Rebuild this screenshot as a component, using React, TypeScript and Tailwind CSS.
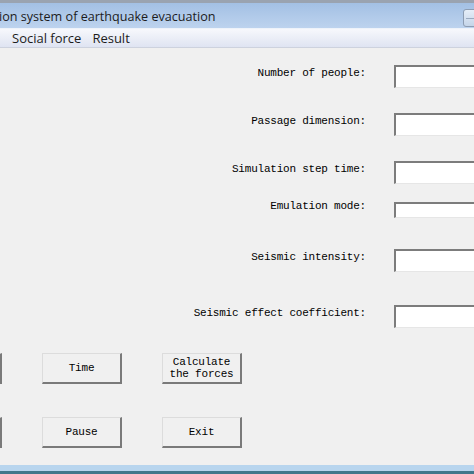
import React from "react";

const mono = { fontFamily: '"Liberation Mono", "DejaVu Sans Mono", monospace' };

function Field({ label, h = 23, mt }: { label: string; h?: number; mt: string }) {
  return (
    <div className={`flex items-center ${mt}`}>
      <div
        className="w-[366px] shrink-0 text-right text-[11px] tracking-[-0.22px] leading-[14px] text-black -translate-y-[4px]"
        style={mono}
      >
        {label}
      </div>
      <div
        className="ml-[28px] w-[90px] shrink-0 bg-white border-t-2 border-l-2 border-t-[#7c7c7c] border-l-[#7c7c7c] border-b border-b-[#e6e6e6]"
        style={{ height: h }}
      />
    </div>
  );
}

function Btn({ children, extra = "" }: { children?: React.ReactNode; extra?: string }) {
  return (
    <div
      className={`w-[80px] h-[31px] shrink-0 flex items-center justify-center text-center leading-[12px] text-[11px] tracking-[-0.22px] text-black bg-[#f0f0f0] border-t border-l border-t-[#dcdcdc] border-l-[#dcdcdc] border-r-2 border-b-2 border-r-[#7a7a7a] border-b-[#7a7a7a] ${extra}`}
      style={mono}
    >
      {children}
    </div>
  );
}

export default function App() {
  return (
    <div
      className="w-[474px] h-[474px] overflow-hidden flex flex-col bg-[#f0f0f0]"
      style={{ fontFamily: '"Open Sans", "Noto Sans", sans-serif' }}
    >
      <div className="h-[3px] bg-[#9aa3b0] shrink-0" />
      <div className="h-[25px] shrink-0 flex items-center justify-between bg-gradient-to-b from-[#a3c0e4] to-[#bdd3ee]">
        <span className="text-[12.6px] text-[#1c1c1c] -ml-[1px] mt-[4px] whitespace-nowrap">
          ion system of earthquake evacuation
        </span>
        <div className="w-[14px] h-[18px] mt-[5px] -mr-[3px] rounded-[3px] border border-[#8d9db3] bg-gradient-to-b from-[#e6eef8] to-[#c5d5e9] flex flex-col justify-center">
          <div className="h-px bg-[#9aaac0] mx-[2px]" />
        </div>
      </div>
      <div className="h-px bg-[#eef3fa] shrink-0" />
      <div className="h-[19px] shrink-0 flex items-center pt-[2px] bg-gradient-to-b from-[#f7f8fc] to-[#dfe4f2] border-b border-b-[#cdd2de] text-[13px] text-[#1c1c1c]">
        <span className="ml-[12px]">Social force</span>
        <span className="ml-[11px]">Result</span>
      </div>
      <div className="flex-1 flex flex-col">
        <Field label="Number of people:" mt="mt-[17px]" />
        <Field label="Passage dimension:" mt="mt-[25px]" />
        <Field label="Simulation step time:" mt="mt-[25px]" />
        <Field label="Emulation mode:" h={16} mt="mt-[18px]" />
        <Field label="Seismic intensity:" mt="mt-[31px]" />
        <Field label="Seismic effect coefficient:" mt="mt-[33px]" />
        <div className="flex gap-[40px] mt-[25px]">
          <Btn extra="-ml-[78px]" />
          <Btn>Time</Btn>
          <Btn>
            Calculate
            <br />
            the forces
          </Btn>
        </div>
        <div className="flex gap-[40px] mt-[33px]">
          <Btn extra="-ml-[78px]" />
          <Btn>Pause</Btn>
          <Btn>Exit</Btn>
        </div>
      </div>
      <div className="h-[6px] bg-[#b8d5ee] shrink-0" />
      <div className="h-[3px] bg-[#42778b] shrink-0" />
    </div>
  );
}
